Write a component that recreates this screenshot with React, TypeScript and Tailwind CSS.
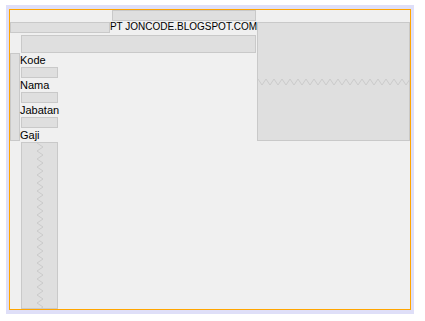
export default function App() {
  const font = { fontFamily: '"Liberation Sans", Arial, sans-serif' };
  const box = 'bg-[#dfdfdf] border border-[#c9c9c9]';

  // zigzag points for the two placeholder panels
  const hz = Array.from({ length: 40 }, (_, i) => `${i * 4},${i % 2 === 0 ? 1 : 7}`).join(' ');
  const vz = Array.from({ length: 44 }, (_, i) => `${i % 2 === 0 ? 1 : 7},${i * 4}`).join(' ');

  return (
    <div className="w-[425px] h-[321px] bg-white pt-[5px] pl-[6px]" style={font}>
      <div className="w-[408px] h-[309px] bg-[#dfdff8] pt-[4px] pb-[4px] px-[3px]">
        <div className="w-[402px] h-[301px] bg-[#ffa500] p-[1px]">
          <div className="w-[400px] h-[299px] bg-[#f0f0f0] overflow-hidden flex flex-col text-black">
            <div className="h-[12px] flex">
              <div className={`${box} ml-[102px] w-[144px] h-[11px]`} />
            </div>
            <div className="flex">
              <div className="w-[247px] flex flex-col">
                <div className="flex items-start h-[12px]">
                  <div className={`${box} w-[101px] h-[11px]`} />
                  <span className="text-[10px] leading-[12px] -mt-[1px] whitespace-nowrap">PT JONCODE.BLOGSPOT.COM</span>
                </div>
                <div className={`${box} mt-[1px] ml-[11px] w-[235px] h-[18px]`} />
                <div className="flex items-start">
                  <div className={`${box} w-[10px] h-[88px]`} />
                  <div className="flex flex-col mt-[1px]">
                    {['Kode', 'Nama', 'Jabatan'].map((l) => (
                      <div key={l} className="flex flex-col mb-[1px]">
                        <span className="text-[11px] leading-[13px]">{l}</span>
                        <div className={`${box} ml-[1px] w-[37px] h-[11px]`} />
                      </div>
                    ))}
                    <span className="text-[11px] leading-[13px]">Gaji</span>
                    <div className={`${box} ml-[1px] w-[37px] h-[167px] flex justify-center overflow-hidden`}>
                      <svg width="8" height="167" className="shrink-0">
                        <polyline points={vz} fill="none" stroke="#cbcbcb" strokeWidth="1" />
                      </svg>
                    </div>
                  </div>
                </div>
              </div>
              <div className={`${box} w-[153px] h-[119px] flex items-center overflow-hidden`}>
                <svg width="156" height="8" className="shrink-0">
                  <polyline points={hz} fill="none" stroke="#cbcbcb" strokeWidth="1" />
                </svg>
              </div>
            </div>
          </div>
        </div>
      </div>
    </div>
  );
}
